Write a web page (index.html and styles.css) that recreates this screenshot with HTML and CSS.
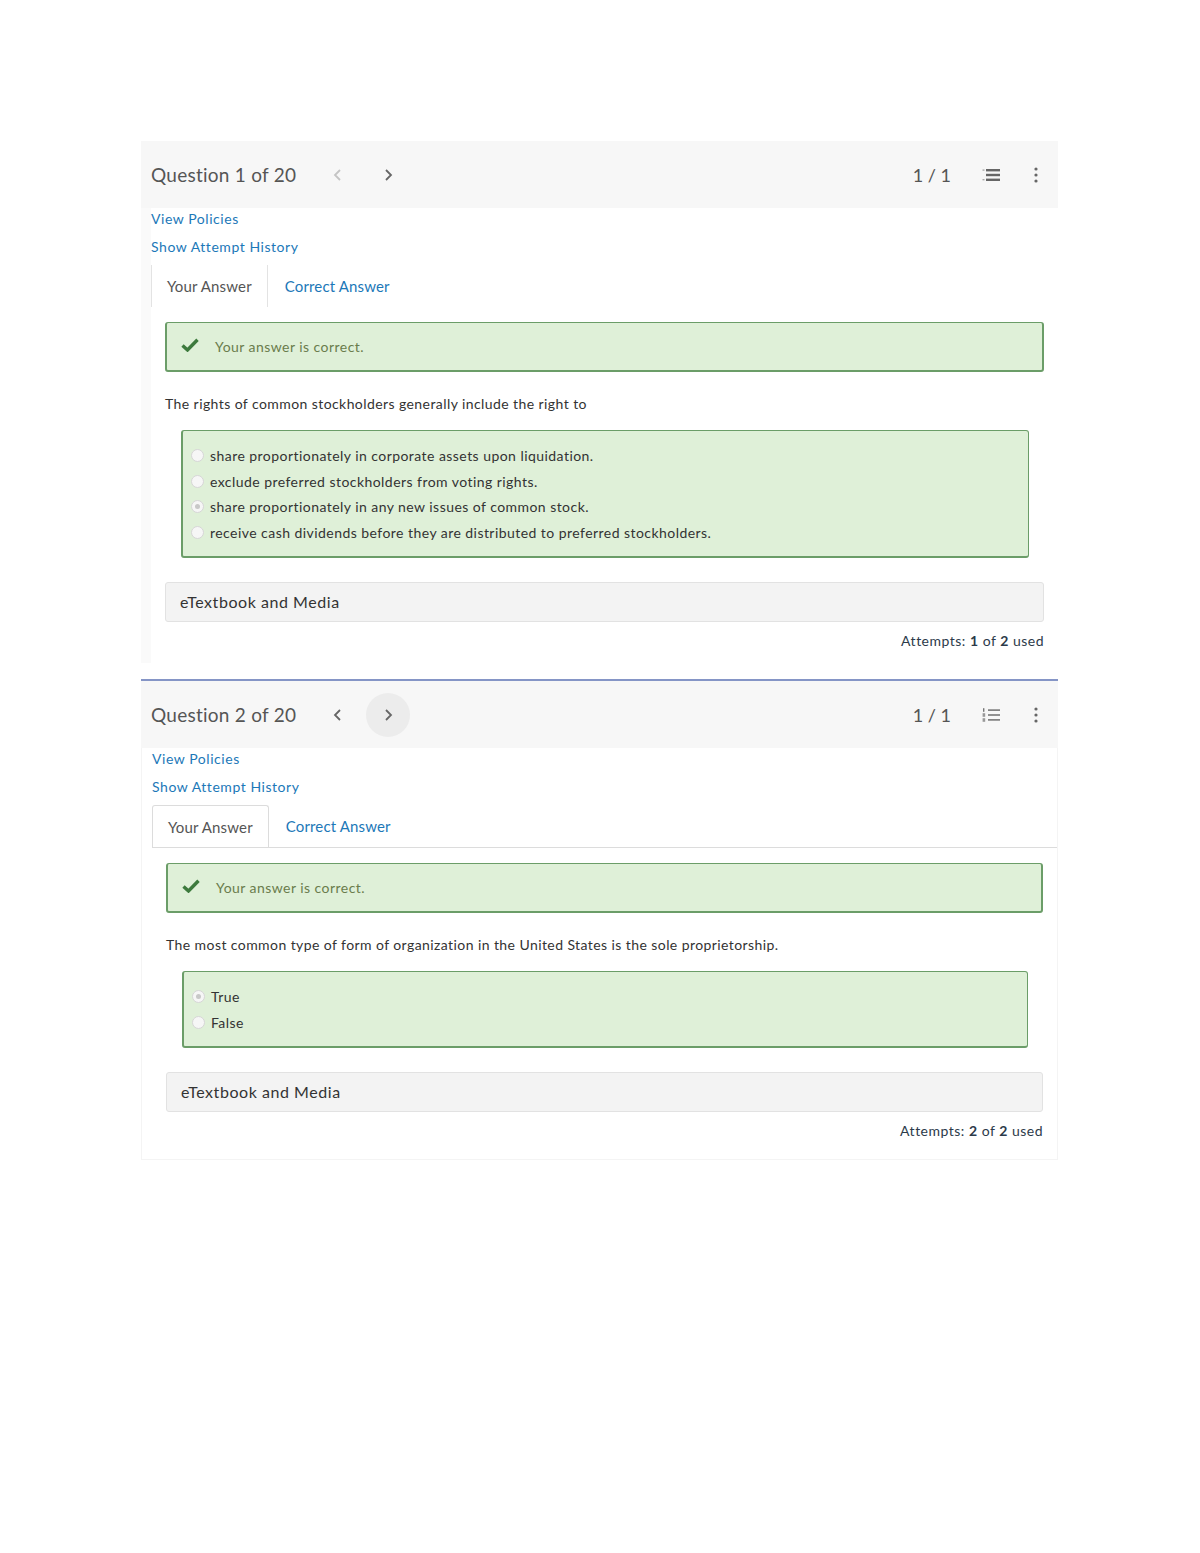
FILE: index.html
```html
<!DOCTYPE html>
<html lang="en">
<head>
    <meta charset="UTF-8">
    <meta name="viewport" content="width=device-width, initial-scale=1.0">
    <title>Question Review</title>
    <link rel="stylesheet" href="styles.css">
</head>
<body>
    <div class="page">

        <!-- Question 1 -->
        <section class="question first">
            <header class="q-header">
                <h2 class="q-title">Question 1 of 20</h2>
                <span class="nav-btn disabled">
                    <svg width="12" height="14" viewBox="0 0 12 14"><path d="M8 2 L3 7 L8 12" fill="none" stroke="currentColor" stroke-width="1.8"/></svg>
                </span>
                <span class="nav-btn">
                    <svg width="12" height="14" viewBox="0 0 12 14"><path d="M4 2 L9 7 L4 12" fill="none" stroke="currentColor" stroke-width="1.8"/></svg>
                </span>
                <span class="score">1 / 1</span>
                <span class="icon-btn">
                    <svg width="18" height="16" viewBox="0 0 18 16">
                        <rect x="4" y="2" width="14" height="2.4" fill="#666"/>
                        <rect x="4" y="6.8" width="14" height="2.4" fill="#666"/>
                        <rect x="4" y="11.6" width="14" height="2.4" fill="#666"/>
                        <rect x="0.5" y="2.4" width="2" height="1.4" fill="#aaa"/>
                        <rect x="0.5" y="12" width="2" height="1.4" fill="#aaa"/>
                    </svg>
                </span>
                <span class="icon-btn">
                    <svg width="4" height="18" viewBox="0 0 4 18"><circle cx="2" cy="3" r="1.6" fill="#666"/><circle cx="2" cy="9" r="1.6" fill="#666"/><circle cx="2" cy="15" r="1.6" fill="#666"/></svg>
                </span>
            </header>

            <div class="q-body">
                <a class="link">View Policies</a>
                <a class="link">Show Attempt History</a>

                <div class="tabs">
                    <span class="tab active">Your Answer</span>
                    <span class="tab">Correct Answer</span>
                </div>

                <div class="content">
                    <div class="feedback">
                        <svg class="check" width="18" height="14" viewBox="0 0 18 14"><path d="M1.5 7.5 L6.5 12 L16.5 1.8" fill="none" stroke="#3d7a3d" stroke-width="3.4"/></svg>
                        <span>Your answer is correct.</span>
                    </div>

                    <p class="q-text">The rights of common stockholders generally include the right to</p>

                    <div class="options">
                        <label class="option"><span class="radio"></span>share proportionately in corporate assets upon liquidation.</label>
                        <label class="option"><span class="radio"></span>exclude preferred stockholders from voting rights.</label>
                        <label class="option"><span class="radio checked"></span>share proportionately in any new issues of common stock.</label>
                        <label class="option"><span class="radio"></span>receive cash dividends before they are distributed to preferred stockholders.</label>
                    </div>

                    <div class="media">eTextbook and Media</div>

                    <div class="attempts">Attempts: <b>1</b> of <b>2</b> used</div>
                </div>
            </div>
        </section>

        <!-- Question 2 -->
        <section class="question second">
            <header class="q-header">
                <h2 class="q-title">Question 2 of 20</h2>
                <span class="nav-btn">
                    <svg width="12" height="14" viewBox="0 0 12 14"><path d="M8 2 L3 7 L8 12" fill="none" stroke="currentColor" stroke-width="1.8"/></svg>
                </span>
                <span class="nav-btn hover">
                    <svg width="12" height="14" viewBox="0 0 12 14"><path d="M4 2 L9 7 L4 12" fill="none" stroke="currentColor" stroke-width="1.8"/></svg>
                </span>
                <span class="score">1 / 1</span>
                <span class="icon-btn">
                    <svg width="18" height="16" viewBox="0 0 18 16">
                        <rect x="6" y="2.4" width="12" height="1.4" fill="#666"/>
                        <rect x="6" y="7.3" width="12" height="1.4" fill="#666"/>
                        <rect x="6" y="12.2" width="12" height="1.4" fill="#666"/>
                        <rect x="1" y="1.2" width="1.4" height="3.6" fill="#777"/>
                        <rect x="0.6" y="6.2" width="2.6" height="3.6" fill="#999"/>
                        <rect x="0.6" y="11.2" width="2.6" height="3.6" fill="#999"/>
                    </svg>
                </span>
                <span class="icon-btn">
                    <svg width="4" height="18" viewBox="0 0 4 18"><circle cx="2" cy="3" r="1.6" fill="#666"/><circle cx="2" cy="9" r="1.6" fill="#666"/><circle cx="2" cy="15" r="1.6" fill="#666"/></svg>
                </span>
            </header>

            <div class="q-body">
                <a class="link">View Policies</a>
                <a class="link">Show Attempt History</a>

                <div class="tabs lined">
                    <span class="tab active">Your Answer</span>
                    <span class="tab">Correct Answer</span>
                </div>

                <div class="content">
                    <div class="feedback">
                        <svg class="check" width="18" height="14" viewBox="0 0 18 14"><path d="M1.5 7.5 L6.5 12 L16.5 1.8" fill="none" stroke="#3d7a3d" stroke-width="3.4"/></svg>
                        <span>Your answer is correct.</span>
                    </div>

                    <p class="q-text">The most common type of form of organization in the United States is the sole proprietorship.</p>

                    <div class="options">
                        <label class="option"><span class="radio checked"></span>True</label>
                        <label class="option"><span class="radio"></span>False</label>
                    </div>

                    <div class="media">eTextbook and Media</div>

                    <div class="attempts">Attempts: <b>2</b> of <b>2</b> used</div>
                </div>
            </div>
        </section>

    </div>
</body>
</html>
```

FILE: styles.css
```css
html, body {
    margin: 0;
    padding: 0;
    background-color: white;
}

body {
    font-family: Lato, "Open Sans", sans-serif;
    color: #333;
}

.page {
    width: 917px;
    margin-left: 141px;
    padding-top: 141px;
    display: flex;
    flex-direction: column;
    gap: 16px;
}

.question.second {
    border-top: 2px solid #8595c6;
}

/* header bar */
.q-header {
    height: 67px;
    background-color: #f7f7f7;
    display: flex;
    align-items: center;
    padding-left: 10px;
}

.q-title {
    margin: 0 20px 0 0;
    font-size: 19px;
    font-weight: normal;
    letter-spacing: 0.25px;
    color: #555;
}

.nav-btn,
.icon-btn {
    width: 44px;
    height: 44px;
    border-radius: 50%;
    display: flex;
    align-items: center;
    justify-content: center;
    color: #666;
}

.nav-btn + .nav-btn {
    margin-left: 6px;
}

.nav-btn.disabled {
    color: #c4c4c4;
}

.nav-btn.hover {
    background-color: #ececec;
}

.score {
    margin-left: auto;
    margin-right: 18px;
    font-size: 18px;
    color: #555;
}

.icon-btn + .icon-btn {
    margin-left: 1px;
}

/* body */
.q-body {
    display: flex;
    flex-direction: column;
    align-items: flex-start;
}

.first .q-body {
    border-left: 10px solid #fafafa;
}

.second .q-body {
    border: 1px solid #f4f4f4;
    border-top: none;
    padding-left: 10px;
    padding-bottom: 6px;
}

.link {
    font-size: 14px;
    line-height: 22px;
    letter-spacing: 0.55px;
    color: #1c78b8;
}

.link + .link {
    margin-top: 6px;
}

.tabs {
    display: flex;
    margin-top: 7px;
    align-self: stretch;
}

.tabs.lined {
    border-bottom: 1px solid #dcdcdc;
}

.tab {
    height: 42px;
    line-height: 42px;
    padding: 0 15px;
    font-size: 15px;
    letter-spacing: 0.15px;
    color: #1c78b8;
}

.tab + .tab {
    padding-left: 17px;
}

.tab.active {
    color: #555;
    border-left: 1px solid #e3e3e3;
    border-right: 1px solid #e3e3e3;
}

.tabs.lined .tab.active {
    border: 1px solid #dcdcdc;
    border-bottom: none;
    border-radius: 3px 3px 0 0;
    background-color: white;
    margin-bottom: -1px;
    height: 41px;
}

.content {
    align-self: stretch;
    padding: 15px 14px 12px 14px;
    display: flex;
    flex-direction: column;
}

.feedback {
    height: 50px;
    box-sizing: border-box;
    background-color: #dff0d8;
    border: 1px solid #6b9d68;
    border-left-width: 2px;
    border-right-width: 2px;
    border-bottom-width: 2px;
    border-radius: 3px;
    display: flex;
    align-items: center;
    padding-left: 14px;
    font-size: 14px;
    letter-spacing: 0.45px;
    color: #6a7c4c;
}

.check {
    margin-right: 16px;
    margin-top: -4px;
}

.q-text {
    margin: 22px 0 0 0;
    font-size: 14px;
    line-height: 20px;
    letter-spacing: 0.42px;
    color: #333;
}

.options {
    margin: 16px 15px 0 16px;
    background-color: #dff0d8;
    border: 1px solid #6b9d68;
    border-left-width: 2px;
    border-bottom-width: 2px;
    border-radius: 3px;
    padding: 12px 0 11px 8px;
    display: flex;
    flex-direction: column;
}

.option {
    display: flex;
    align-items: center;
    font-size: 14px;
    line-height: 25.5px;
    letter-spacing: 0.45px;
    color: #333;
}

.radio {
    width: 11px;
    height: 11px;
    border-radius: 50%;
    border: 1px solid #d6d6d6;
    background-color: #f6f6f6;
    margin-right: 6px;
    position: relative;
}

.radio.checked::after {
    content: "";
    position: absolute;
    left: 3px;
    top: 3px;
    width: 5px;
    height: 5px;
    border-radius: 50%;
    background-color: #c8c8c8;
}

.media {
    margin-top: 24px;
    height: 40px;
    box-sizing: border-box;
    line-height: 38px;
    padding-left: 14px;
    background-color: #f3f3f3;
    border: 1px solid #e2e2e2;
    border-radius: 3px;
    font-size: 16px;
    letter-spacing: 0.55px;
    color: #333;
}

.attempts {
    margin-top: 9px;
    text-align: right;
    font-size: 14px;
    line-height: 20px;
    letter-spacing: 0.5px;
    color: #2c3a4a;
}
```
